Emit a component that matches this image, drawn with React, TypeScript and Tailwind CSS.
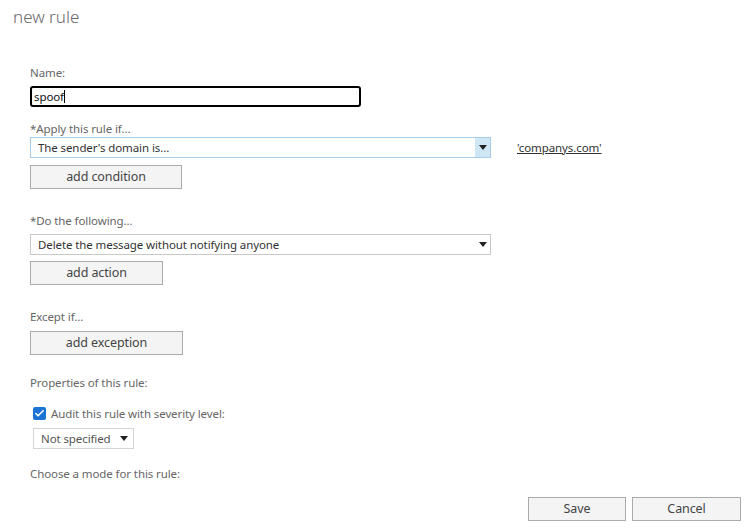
import { Check } from 'lucide-react';

function Caret() {
  return (
    <svg width="8" height="5" viewBox="0 0 8 5" className="shrink-0">
      <path d="M0 0h8L4 5z" fill="#222" />
    </svg>
  );
}

function Dropdown({ value, focused }: { value: string; focused?: boolean }) {
  return (
    <div
      className={
        'flex items-stretch w-[461px] h-[21px] bg-white border ' +
        (focused ? 'border-[#a9cde8]' : 'border-[#c8c8c8]')
      }
    >
      <span className="flex-1 pl-[7px] flex items-center text-[#333] truncate">{value}</span>
      <span className={'w-[15px] flex items-center justify-center ' + (focused ? 'bg-[#cfe6f5]' : '')}>
        <Caret />
      </span>
    </div>
  );
}

function GrayButton({ label, width }: { label: string; width: string }) {
  return (
    <button
      type="button"
      className={
        'h-[24px] bg-[#f4f4f4] border border-[#ababab] text-[#444] text-[12.5px] tracking-[-0.1px] leading-none ' +
        width
      }
    >
      {label}
    </button>
  );
}

export default function App() {
  return (
    <div className="w-[753px] h-[529px] bg-white relative font-['Segoe_UI','Noto_Sans',sans-serif] text-[11.5px] tracking-[-0.1px] text-[#555] overflow-hidden">
      <div className="pl-[13px] pt-[5px] text-[17px] leading-[24px] text-[#6a6a6a] font-light tracking-normal">
        new rule
      </div>

      <div className="pl-[30px] pt-[36px] flex flex-col">
        <div className="leading-[16px] text-[#666]">Name:</div>
        <div className="mt-[5px] w-[331px] h-[21px] border-2 border-black rounded-[3px] flex items-center pl-[2px] text-[#111]">
          spoof<span className="w-px h-[13px] bg-black" />
        </div>

        <div className="mt-[14px] leading-[16px] text-[#666]">*Apply this rule if...</div>
        <div className="flex items-center">
          <Dropdown value="The sender's domain is…" focused />
          <a className="ml-[26px] text-[#333] underline">'companys.com'</a>
        </div>
        <div className="mt-[7px]">
          <GrayButton label="add condition" width="w-[152px]" />
        </div>

        <div className="mt-[24px] leading-[16px] text-[#666]">*Do the following...</div>
        <div className="mt-[5px]">
          <Dropdown value="Delete the message without notifying anyone" />
        </div>
        <div className="mt-[6px]">
          <GrayButton label="add action" width="w-[133px]" />
        </div>

        <div className="mt-[24px] leading-[16px] text-[#666]">Except if...</div>
        <div className="mt-[6px]">
          <GrayButton label="add exception" width="w-[153px]" />
        </div>

        <div className="mt-[20px] leading-[16px] text-[#666]">Properties of this rule:</div>
        <div className="mt-[14px] ml-[3px] flex items-center gap-[5px]">
          <span className="w-[13px] h-[13px] rounded-[2px] bg-[#1b73d3] flex items-center justify-center">
            <Check size={11} strokeWidth={3.5} color="white" />
          </span>
          <span className="text-[#666]">Audit this rule with severity level:</span>
        </div>
        <div className="mt-[6px] ml-[3px] w-[101px] h-[21px] border border-[#d4d4d4] flex items-center justify-between pl-[7px] pr-[5px] text-[#555]">
          <span>Not specified</span>
          <Caret />
        </div>

        <div className="mt-[17px] leading-[16px] text-[#666]">Choose a mode for this rule:</div>
      </div>

      <div className="absolute right-[12px] bottom-[8px] flex gap-[6px]">
        <button type="button" className="w-[98px] h-[24px] bg-[#f4f4f4] border border-[#ababab] text-[#444] text-[12.5px]">
          Save
        </button>
        <button type="button" className="w-[109px] h-[24px] bg-[#f4f4f4] border border-[#ababab] text-[#444] text-[12.5px]">
          Cancel
        </button>
      </div>
    </div>
  );
}
